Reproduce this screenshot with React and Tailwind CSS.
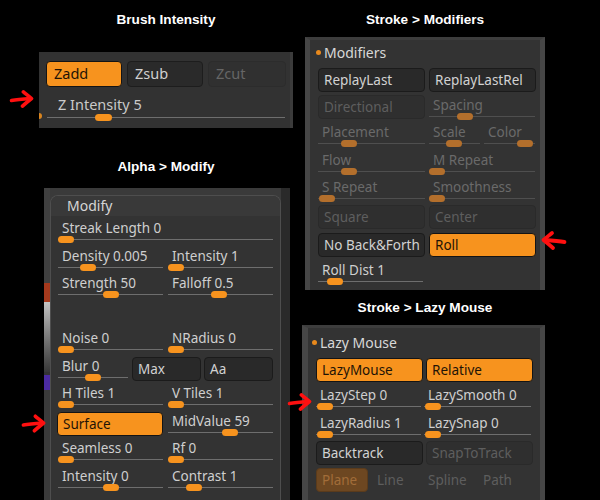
import React from "react";

const BODY = { fontFamily: '"Noto Sans", "Open Sans", sans-serif' };

function Slider({ label, thumb = 0, dim = false, className = "", size = "text-[13.5px]" }) {
  return (
    <div className={`flex h-[27.5px] flex-col ${className}`}>
      <div
        className={`flex h-[20px] items-end whitespace-nowrap pl-[4px] leading-[16px] ${size} ${
          dim ? "text-[#6a6a6a]" : "text-[#cfcfcf]"
        }`}
      >
        {label}
      </div>
      <div className="relative h-[7px]">
        <div className={`absolute left-0 right-0 top-[3px] h-px ${dim ? "bg-[#4f4f4f]" : "bg-[#6e6e6e]"}`} />
        <div
          className={`absolute top-0 h-[7px] w-[16px] rounded-full ${dim ? "bg-[#b36f2c]" : "bg-[#f7931e]"}`}
          style={{ left: thumb }}
        />
      </div>
    </div>
  );
}

function Btn({ children, variant = "normal", className = "" }) {
  const styles = {
    normal: "bg-[#292929] border-[#1b1b1b] text-[#d2d2d2]",
    dim: "bg-[#2f2f2f] border-[#2a2a2a] text-[#5e5e5e]",
    orange: "bg-[#f7931e] border-[#141414] text-[#1f1306]",
    plane: "bg-[#6d4721] border-[#5b3b1b] text-[#a26d39]",
  };
  return (
    <div className={`flex h-[24px] items-center rounded-[4px] border pl-[5px] text-[13.5px] leading-[16px] whitespace-nowrap ${styles[variant]} ${className}`}>
      {children}
    </div>
  );
}

function Row({ children, className = "" }) {
  return <div className={`flex h-[27.5px] ${className}`}>{children}</div>;
}

function BtnRow({ children, className = "" }) {
  return <div className={`flex h-[27.5px] items-start pt-[2.5px] ${className}`}>{children}</div>;
}

function Arrow({ className = "" }) {
  return (
    <svg viewBox="0 0 26 21" className={`absolute ${className}`} fill="none" stroke="#ff1010" strokeWidth="3.8" strokeLinecap="round" strokeLinejoin="round">
      <path d="M2.5 12 C8 11.2 15 10.6 22.5 10" />
      <path d="M15 3 C18 5.5 21 7.8 23.5 10 C20 12.8 17 15.3 14 18" />
    </svg>
  );
}

function Title({ children, className = "" }) {
  return (
    <div
      className={`text-center text-[13.6px] font-bold leading-[16px] text-white ${className}`}
      style={{ fontFamily: '"Liberation Sans", Arial, sans-serif' }}
    >
      {children}
    </div>
  );
}

function BrushPanel() {
  return (
    <div className="relative h-[76px] w-[254px] border-r-[3px] border-[#3b3b3b] bg-[#323232]">
      <div className="absolute left-0 top-[61px] h-[6px] w-[3px] rounded-r-full bg-[#d9851f]" />
      <div className="flex gap-[5px] pl-[7px] pt-[9px]">
        <div className="flex h-[26px] w-[76px] items-center rounded-[4px] border border-[#141414] bg-[#f7931e] pl-[7px] text-[14.5px] text-[#1f1306]">Zadd</div>
        <div className="flex h-[26px] w-[76px] items-center rounded-[4px] border border-[#1d1d1d] bg-[#2a2a2a] pl-[7px] text-[14.5px] text-[#d0d0d0]">Zsub</div>
        <div className="flex h-[26px] w-[78px] items-center rounded-[4px] border border-[#2c2c2c] bg-[#303030] pl-[7px] text-[14.5px] text-[#666666]">Zcut</div>
      </div>
      <div className="mt-[9px] h-[16px] pl-[19px] text-[14.5px] leading-[16px] text-[#cacaca]">Z Intensity 5</div>
      <div className="relative ml-[8px] mt-[2px] h-[7px] w-[238px]">
        <div className="absolute left-0 right-0 top-[3px] h-px bg-[#6e6e6e]" />
        <div className="absolute left-[48px] top-0 h-[7px] w-[17px] rounded-full bg-[#f7931e]" />
      </div>
    </div>
  );
}

function AlphaPanel() {
  return (
    <div className="ml-[5px] flex h-[312px] w-[246px] overflow-hidden bg-[#3a3a3a]">
      <div className="flex w-[6px] flex-col">
        <div className="h-[95px] bg-[#404040]" />
        <div className="h-[19px] bg-[#a5391d]" />
        <div className="h-[70px] bg-gradient-to-b from-[#c4c4c4] to-[#383838]" />
        <div className="h-[3px] bg-[#333333]" />
        <div className="h-[15px] bg-[#4b2ba3]" />
        <div className="flex-1 bg-[#3a3a3a]" />
      </div>
      <div className="flex w-[231px] flex-col pt-[7px]">
        <div className="flex flex-1 flex-col overflow-hidden rounded-t-[8px] border border-b-0 border-[#4e4e4e] bg-[#333333]">
          <div className="flex h-[20px] items-center bg-[#393939] pl-[16px] text-[14px] leading-[16px] text-[#d6d6d6]">Modify</div>
          <div className="flex flex-col pl-[7px] pr-[7px]">
            <Slider label="Streak Length 0" thumb={0} />
            <Row className="gap-[5px]">
              <Slider label="Density 0.005" thumb={22} className="w-[105px]" />
              <Slider label="Intensity 1" thumb={0} className="w-[105px]" />
            </Row>
            <Row className="gap-[5px]">
              <Slider label="Strength 50" thumb={45} className="w-[105px]" />
              <Slider label="Falloff 0.5" thumb={43} className="w-[105px]" />
            </Row>
            <Row />
            <Row className="gap-[5px]">
              <Slider label="Noise 0" thumb={0} className="w-[105px]" />
              <Slider label="NRadius 0" thumb={0} className="w-[105px]" />
            </Row>
            <Row>
              <Slider label="Blur 0" thumb={27} className="w-[70px]" />
              <div className="ml-[4px] flex pt-[3.5px]">
                <Btn className="w-[69px]">Max</Btn>
              </div>
              <div className="ml-[3px] flex pt-[3.5px]">
                <Btn className="w-[69px]">Aa</Btn>
              </div>
            </Row>
            <Row className="gap-[5px]">
              <Slider label="H Tiles 1" thumb={0} className="w-[105px]" />
              <Slider label="V Tiles 1" thumb={0} className="w-[105px]" />
            </Row>
            <Row className="gap-[5px]">
              <div className="w-[105px] pt-[3px]">
                <Btn variant="orange" className="w-[106px] -ml-px">Surface</Btn>
              </div>
              <Slider label="MidValue 59" thumb={54} className="w-[105px]" />
            </Row>
            <Row className="gap-[5px]">
              <Slider label="Seamless 0" thumb={0} className="w-[105px]" />
              <Slider label="Rf 0" thumb={0} className="w-[105px]" />
            </Row>
            <Row className="gap-[5px]">
              <Slider label="Intensity 0" thumb={45} className="w-[105px]" />
              <Slider label="Contrast 1" thumb={18} className="w-[105px]" />
            </Row>
          </div>
        </div>
      </div>
      <div className="w-[9px] bg-[#2a2a2a]" />
    </div>
  );
}

function ModifiersPanel() {
  return (
    <div className="flex h-[253px] w-[240px] flex-col border-x-[5px] border-t-[3px] border-x-[#464646] border-t-[#3d3d3d] bg-[#333333]">
      <div className="flex h-[25px] items-center gap-[3px] pl-[6px]">
        <div className="h-[5px] w-[5px] rounded-full bg-[#e8891c]" />
        <div className="text-[14px] leading-[16px] text-[#d8d8d8]">Modifiers</div>
      </div>
      <div className="flex flex-col pl-[8px]">
        <BtnRow className="gap-[4px]">
          <Btn className="w-[107px]">ReplayLast</Btn>
          <Btn className="w-[107px]">ReplayLastRel</Btn>
        </BtnRow>
        <Row className="gap-[4px]">
          <div className="pt-[2.5px]">
            <Btn variant="dim" className="w-[107px]">Directional</Btn>
          </div>
          <Slider label="Spacing" dim thumb={28} className="w-[106px]" />
        </Row>
        <Row className="gap-[4px]">
          <Slider label="Placement" dim thumb={23} className="w-[107px]" />
          <Slider label="Scale" dim thumb={17} className="w-[51px]" />
          <Slider label="Color" dim thumb={33} className="w-[51px]" />
        </Row>
        <Row className="gap-[4px]">
          <Slider label="Flow" dim thumb={23} className="w-[107px]" />
          <Slider label="M Repeat" dim thumb={0} className="w-[106px]" />
        </Row>
        <Row className="gap-[4px]">
          <Slider label="S Repeat" dim thumb={1} className="w-[107px]" />
          <Slider label="Smoothness" dim thumb={0} className="w-[106px]" />
        </Row>
        <BtnRow className="gap-[4px]">
          <Btn variant="dim" className="w-[107px]">Square</Btn>
          <Btn variant="dim" className="w-[107px]">Center</Btn>
        </BtnRow>
        <BtnRow className="gap-[4px]">
          <Btn className="w-[107px]">No Back&amp;Forth</Btn>
          <Btn variant="orange" className="w-[107px]">Roll</Btn>
        </BtnRow>
        <Row>
          <Slider label="Roll Dist 1" thumb={9} className="w-[105px]" />
        </Row>
      </div>
    </div>
  );
}

function LazyPanel() {
  return (
    <div className="-ml-[3px] flex h-[175px] w-[243px] flex-col overflow-hidden border-l-[6px] border-r-[5px] border-t-[3px] border-l-[#464646] border-r-[#464646] border-t-[#3d3d3d] bg-[#333333]">
      <div className="flex h-[27.5px] items-center gap-[3px] pl-[4px] pt-[2px]">
        <div className="h-[5px] w-[5px] rounded-full bg-[#e8891c]" />
        <div className="text-[14px] leading-[16px] text-[#d8d8d8]">Lazy Mouse</div>
      </div>
      <div className="flex flex-col pl-[8px]">
        <BtnRow className="gap-[3px]">
          <Btn variant="orange" className="w-[107px]">LazyMouse</Btn>
          <Btn variant="orange" className="w-[107px]">Relative</Btn>
        </BtnRow>
        <Row className="gap-[3px]">
          <Slider label="LazyStep 0" thumb={1} className="w-[105px]" />
          <Slider label="LazySmooth 0" thumb={1} className="w-[107px]" />
        </Row>
        <Row className="gap-[3px]">
          <Slider label="LazyRadius 1" thumb={1} className="w-[105px]" />
          <Slider label="LazySnap 0" thumb={1} className="w-[107px]" />
        </Row>
        <BtnRow className="gap-[3px]">
          <Btn className="w-[107px]">Backtrack</Btn>
          <Btn variant="dim" className="w-[107px]">SnapToTrack</Btn>
        </BtnRow>
        <BtnRow>
          <Btn variant="plane" className="w-[52px]">Plane</Btn>
          <div className="ml-[5px] flex h-[24px] w-[50px] items-center pl-[4px] text-[13.5px] text-[#5e5e5e]">Line</div>
          <div className="ml-[1px] flex h-[24px] w-[55px] items-center pl-[4px] text-[13.5px] text-[#5e5e5e]">Spline</div>
          <div className="flex h-[24px] w-[50px] items-center pl-[4px] text-[13.5px] text-[#5e5e5e]">Path</div>
        </BtnRow>
      </div>
    </div>
  );
}

export default function App() {
  return (
    <div className="relative flex h-[500px] w-[600px] overflow-hidden bg-black" style={BODY}>
      <div className="flex w-[300px] flex-col pl-[39px]">
        <div className="h-[52px] w-[254px] pt-[12px]">
          <Title>Brush Intensity</Title>
        </div>
        <BrushPanel />
        <div className="h-[60px] w-[254px] pt-[31px]">
          <Title>Alpha &gt; Modify</Title>
        </div>
        <AlphaPanel />
      </div>
      <div className="flex w-[300px] flex-col pl-[5px]">
        <div className="h-[37px] w-[240px] pt-[12px]">
          <Title>Stroke &gt; Modifiers</Title>
        </div>
        <ModifiersPanel />
        <div className="h-[35px] w-[240px] pt-[10px]">
          <Title>Stroke &gt; Lazy Mouse</Title>
        </div>
        <LazyPanel />
      </div>

      <Arrow className="left-[9px] top-[89px] h-[20px] w-[25px]" />
      <Arrow className="left-[21px] top-[413px] h-[21px] w-[25px]" />
      <Arrow className="left-[287px] top-[392px] h-[20px] w-[25px]" />
      <Arrow className="left-[539px] top-[230px] h-[21px] w-[30px] -scale-x-100" />
    </div>
  );
}
